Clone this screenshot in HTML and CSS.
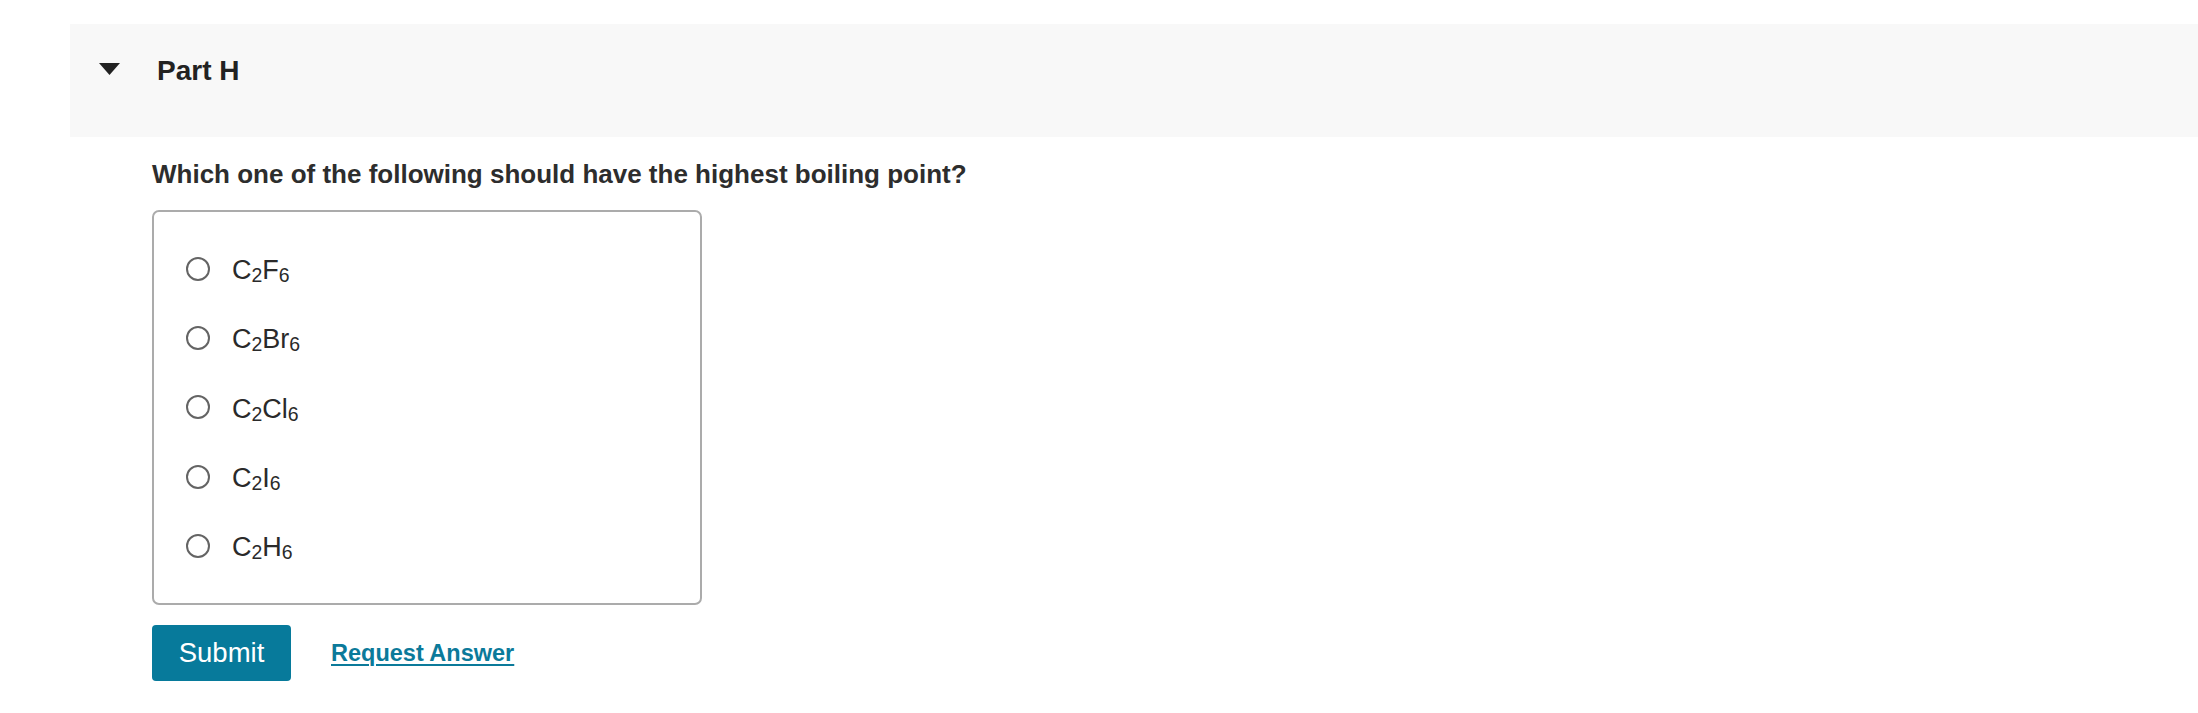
FILE: index.html
```html
<!DOCTYPE html>
<html lang="en">
<head>
  <meta charset="UTF-8" />
  <meta name="viewport" content="width=device-width, initial-scale=1.0" />
  <title>Part H</title>
  <link rel="stylesheet" href="styles.css">
</head>
<body>

<div class="part">
  <div class="part-header">
    <svg class="caret" width="21" height="12" viewBox="0 0 21 12"><path d="M0 0 H21 L10.5 12 Z" fill="#222"/></svg>
    <h2>Part H</h2>
  </div>

  <div class="part-body">
    <p class="question">Which one of the following should have the highest boiling point?</p>

    <div class="choices">
      <label class="choice"><input type="radio" name="answer"><span class="formula">C<sub>2</sub>F<sub>6</sub></span></label>
      <label class="choice"><input type="radio" name="answer"><span class="formula">C<sub>2</sub>Br<sub>6</sub></span></label>
      <label class="choice"><input type="radio" name="answer"><span class="formula">C<sub>2</sub>Cl<sub>6</sub></span></label>
      <label class="choice"><input type="radio" name="answer"><span class="formula">C<sub>2</sub>I<sub>6</sub></span></label>
      <label class="choice"><input type="radio" name="answer"><span class="formula">C<sub>2</sub>H<sub>6</sub></span></label>
    </div>

    <div class="actions">
      <button class="submit">Submit</button>
      <a class="request" href="#">Request Answer</a>
    </div>
  </div>
</div>

</body>
</html>
```

FILE: styles.css
```css
body {
  margin: 0;
  font-family: "Liberation Sans", Arial, sans-serif;
  color: #2d2d2d;
  background: #fff;
}
.part {
  padding-top: 24px;
}
.part-header {
  margin-left: 70px;
  height: 113px;
  box-sizing: border-box;
  background: #f8f8f8;
  display: flex;
  align-items: flex-start;
  padding: 31px 0 0 29px;
}
.caret {
  margin-top: 8px;
  margin-right: 37px;
}
.part-header h2 {
  margin: 0;
  font-size: 28px;
  line-height: 32px;
  font-weight: bold;
  color: #222;
}
.part-body {
  margin-left: 152px;
}
.question {
  margin: 22px 0 21px;
  font-size: 26px;
  line-height: 30px;
  font-weight: bold;
}
.choices {
  width: 550px;
  box-sizing: border-box;
  border: 2px solid #ababab;
  border-radius: 7px;
  padding: 22px 0 23px 32px;
}
.choice {
  display: flex;
  align-items: center;
  height: 69.3px;
  cursor: pointer;
}
.choice input {
  appearance: none;
  -webkit-appearance: none;
  margin: 0 22px 0 0;
  width: 24px;
  height: 24px;
  border: 2px solid #646464;
  border-radius: 50%;
  background: #fff;
}
.formula {
  font-size: 27px;
  line-height: 30px;
  margin-top: 3px;
  color: #2a2a2a;
}
.formula sub {
  font-size: 0.72em;
  vertical-align: -3px;
  line-height: 0;
}
.actions {
  margin-top: 20px;
  display: flex;
  align-items: center;
  gap: 40px;
}
.submit {
  width: 139px;
  height: 56px;
  border: none;
  border-radius: 4px;
  background: #077a9b;
  color: #fff;
  font-family: "Liberation Sans", Arial, sans-serif;
  font-size: 27.5px;
  cursor: pointer;
}
.request {
  font-size: 23.5px;
  font-weight: bold;
  color: #0b7a9a;
  text-decoration: underline;
  text-decoration-thickness: 2px;
  text-underline-offset: 3px;
}
```
